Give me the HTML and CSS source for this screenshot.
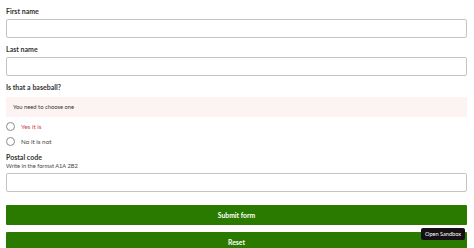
FILE: index.html
```html
<!DOCTYPE html>
<html>
<head>
<meta charset="utf-8">
<link rel="stylesheet" href="styles.css">
</head>
<body>
<form class="form">
  <div class="field">
    <label class="label">First name</label>
    <input class="input" type="text">
  </div>
  <div class="field">
    <label class="label">Last name</label>
    <input class="input" type="text">
  </div>
  <div class="field">
    <div class="label">Is that a baseball?</div>
    <div class="alert">You need to choose one</div>
    <div class="radios">
      <label class="radio radio-error"><span class="circle"></span>Yes it is</label>
      <label class="radio"><span class="circle"></span>No it is not</label>
    </div>
  </div>
  <div class="field field-postal">
    <label class="label label-tight">Postal code</label>
    <div class="hint">Write in the format A1A 2B2</div>
    <input class="input" type="text">
  </div>
  <div class="buttons">
    <button type="button" class="btn">Submit form</button>
    <button type="button" class="btn">Reset</button>
  </div>
</form>
<div class="tooltip">Open Sandbox</div>
</body>
</html>
```

FILE: styles.css
```css
html, body {
  margin: 0;
  padding: 0;
  background: #ffffff;
  overflow: hidden;
}
body {
  font-family: "Lato", "Liberation Sans", sans-serif;
  color: #2b2b2b;
}
.form {
  padding: 5px 7px 0 6px;
  display: flex;
  flex-direction: column;
}
.field {
  display: flex;
  flex-direction: column;
  margin-bottom: 5px;
}
.label {
  font-size: 7px;
  font-weight: 700;
  line-height: 12px;
  height: 12px;
  margin-bottom: 2px;
  color: #333;
}
.input {
  box-sizing: border-box;
  height: 19px;
  width: 100%;
  margin: 0;
  border: 1px solid #c4c4c4;
  border-radius: 2px;
  background: #fff;
  padding: 0 4px;
}
.alert {
  margin-top: 2px;
  height: 20px;
  background: #fdf3f3;
  font-size: 5.8px;
  line-height: 20px;
  padding: 0 7px;
  color: #333;
}
.radios {
  display: flex;
  flex-direction: column;
  gap: 3px;
  margin-top: 3px;
}
.radio {
  display: flex;
  align-items: center;
  height: 12px;
  font-size: 6.3px;
  color: #444;
}
.radio-error {
  color: #c8414f;
}
.circle {
  box-sizing: border-box;
  width: 9px;
  height: 9px;
  border: 1px solid #8a8a8a;
  border-radius: 50%;
  margin-right: 6px;
  background: #fff;
}
.field-postal {
  margin-top: 0;
}
.label-tight {
  line-height: 10px;
  height: 10px;
  margin-bottom: 0;
}
.hint {
  font-size: 5.7px;
  line-height: 8px;
  height: 8px;
  margin-bottom: 3px;
  color: #444;
}
.buttons {
  display: flex;
  flex-direction: column;
  gap: 7px;
  margin-top: 8px;
}
.btn {
  height: 20px;
  width: 100%;
  border: 0;
  border-radius: 1px;
  background: #2a7a00;
  color: #fff;
  font-family: "Lato", "Liberation Sans", sans-serif;
  font-size: 6.8px;
  font-weight: 700;
  padding: 0;
}
.tooltip {
  position: absolute;
  left: 421px;
  top: 228px;
  width: 44px;
  height: 12px;
  background: #141014;
  color: #fff;
  font-size: 5.6px;
  line-height: 12px;
  text-align: center;
  border-radius: 2px;
}
```
